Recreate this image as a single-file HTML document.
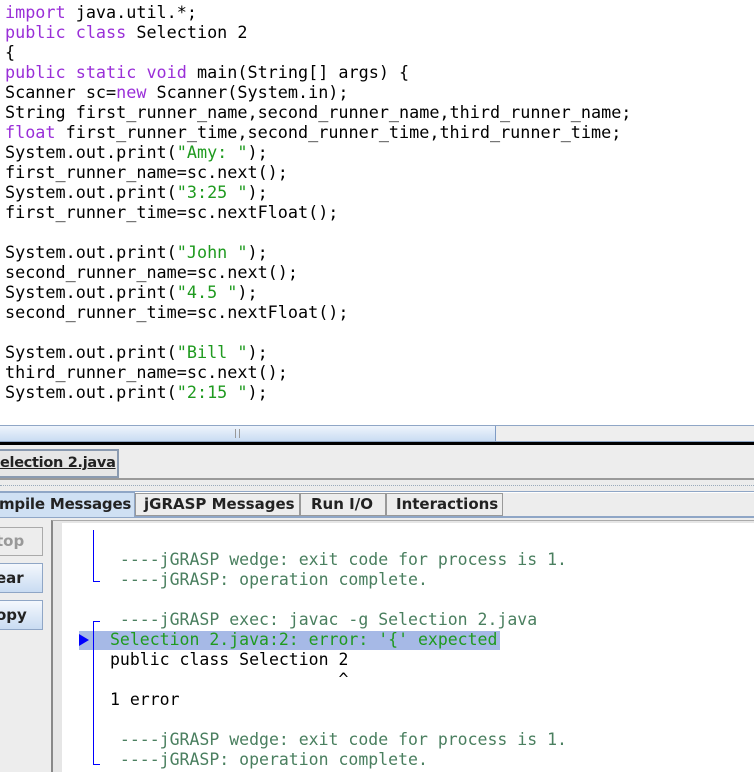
<!DOCTYPE html>
<html><head><style>
*{margin:0;padding:0;box-sizing:border-box}
body{width:754px;height:772px;overflow:hidden;background:#fff;position:relative;font-family:"DejaVu Sans Mono",monospace}
.code{position:absolute;left:5px;top:2px;font-size:16.8px;line-height:20px;white-space:pre;color:#000}
.k{color:#9a2fd8}.s{color:#1f9a1f}
.a{position:absolute}
.out{position:absolute;left:0;top:0;font-size:16.5px;line-height:20px;white-space:pre}
.g{color:#4a7f5f}
.ui{font-family:"DejaVu Sans","Liberation Sans",sans-serif;font-weight:bold;font-size:15px;color:#222;white-space:nowrap;overflow:hidden}
</style></head><body>
<div class="code"><span class="k">import</span> java.util.*;
<span class="k">public class</span> Selection 2
{
<span class="k">public static void</span> main(String[] args) {
Scanner sc=<span class="k">new</span> Scanner(System.in);
String first_runner_name,second_runner_name,third_runner_name;
<span class="k">float</span> first_runner_time,second_runner_time,third_runner_time;
System.out.print(<span class="s">"Amy: "</span>);
first_runner_name=sc.next();
System.out.print(<span class="s">"3:25 "</span>);
first_runner_time=sc.nextFloat();

System.out.print(<span class="s">"John "</span>);
second_runner_name=sc.next();
System.out.print(<span class="s">"4.5 "</span>);
second_runner_time=sc.nextFloat();

System.out.print(<span class="s">"Bill "</span>);
third_runner_name=sc.next();
System.out.print(<span class="s">"2:15 "</span>);</div>

<div class="a" style="left:0;top:425px;width:754px;height:17px;background:#eee;border-top:1px solid #8fa6c6;border-bottom:1px solid #8fa6c6"></div>
<div class="a" style="left:0;top:426px;width:496px;height:15px;background:linear-gradient(#eef4fc,#c9dcf2);border-right:1px solid #7f9bc4"></div>
<div class="a" style="left:235px;top:429px;width:5px;height:9px;border-left:1px solid #999;border-right:1px solid #999"></div>
<div class="a" style="left:0;top:442px;width:754px;height:3px;background:#000"></div>
<div class="a" style="left:0;top:445px;width:754px;height:35px;background:#ededed;border-bottom:2px solid #9a9a9a"></div>
<div class="a ui" style="left:-2px;top:449px;width:121px;height:29px;background:#e6e6e6;border:2px solid #8a9ab0;padding:4px 0 0 0;text-decoration:underline;font-size:14.5px;letter-spacing:-0.3px">election 2.java</div>
<div class="a" style="left:0;top:480px;width:754px;height:12px;background:#ececec;border-bottom:1px solid #8fa6c6"></div>
<div class="a" style="left:0;top:485px;width:754px;height:0;border-top:1px dotted #9ab"></div>
<div class="a" style="left:0;top:493px;width:754px;height:25px;background:#ededed;border-bottom:2px solid #8fa6c6"></div>
<div class="a ui" style="left:-10px;top:492px;width:145px;height:25px;background:#cfe0f3;border:1px solid #8fa6c6;border-bottom:none;padding:2px 0 0 8px;letter-spacing:-0.2px">mpile Messages</div>
<div class="a ui" style="left:135px;top:493px;width:165px;height:23px;border:1px solid #999;padding:1px 0 0 8px">jGRASP Messages</div>
<div class="a ui" style="left:300px;top:493px;width:86px;height:23px;border:1px solid #999;padding:1px 0 0 10px">Run I/O</div>
<div class="a ui" style="left:386px;top:493px;width:117px;height:23px;border:1px solid #999;padding:1px 0 0 9px">Interactions</div>
<div class="a" style="left:0;top:518px;width:754px;height:254px;background:#ededed"></div>
<div class="a ui" style="left:-5px;top:527px;width:48px;height:29px;border:1px solid #aaa;color:#999;padding:4px 0 0 0">top</div>
<div class="a ui" style="left:-5px;top:563px;width:48px;height:30px;border:1px solid #8fa6c6;background:linear-gradient(#f4f8fd,#c9dcf2);padding:5px 0 0 0">ear</div>
<div class="a ui" style="left:-5px;top:600px;width:48px;height:30px;border:1px solid #8fa6c6;background:linear-gradient(#f4f8fd,#c9dcf2);padding:5px 0 0 0">opy</div>
<div class="a" style="left:51px;top:520px;width:703px;height:252px;border-left:2px solid #888;border-top:1px solid #aaa;background:#e6e6e6"></div>
<div class="a" style="left:62px;top:523px;width:692px;height:249px;background:#fff"></div>
<div class="a" style="left:79px;top:631px;width:421px;height:19px;background:#a6b9e6"></div>
<div class="a" style="left:93px;top:530px;width:7px;height:52px;border-left:1px solid #00f;border-bottom:1px solid #00f"></div>
<div class="a" style="left:93px;top:621px;width:7px;height:144px;border-left:1px solid #00f;border-top:1px solid #00f;border-bottom:1px solid #00f"></div>
<div class="a" style="left:79px;top:634px;width:0;height:0;border-left:10px solid #00f;border-top:6px solid transparent;border-bottom:6px solid transparent"></div>
<div class="out" style="left:110px;top:550px"><span class="g"> ----jGRASP wedge: exit code for process is 1.
 ----jGRASP: operation complete.

 ----jGRASP exec: javac -g Selection 2.java</span>
<span class="s">Selection 2.java:2: error: '{' expected</span>
public class Selection 2
                       ^
1 error

<span class="g"> ----jGRASP wedge: exit code for process is 1.
 ----jGRASP: operation complete.</span></div>
</body></html>
